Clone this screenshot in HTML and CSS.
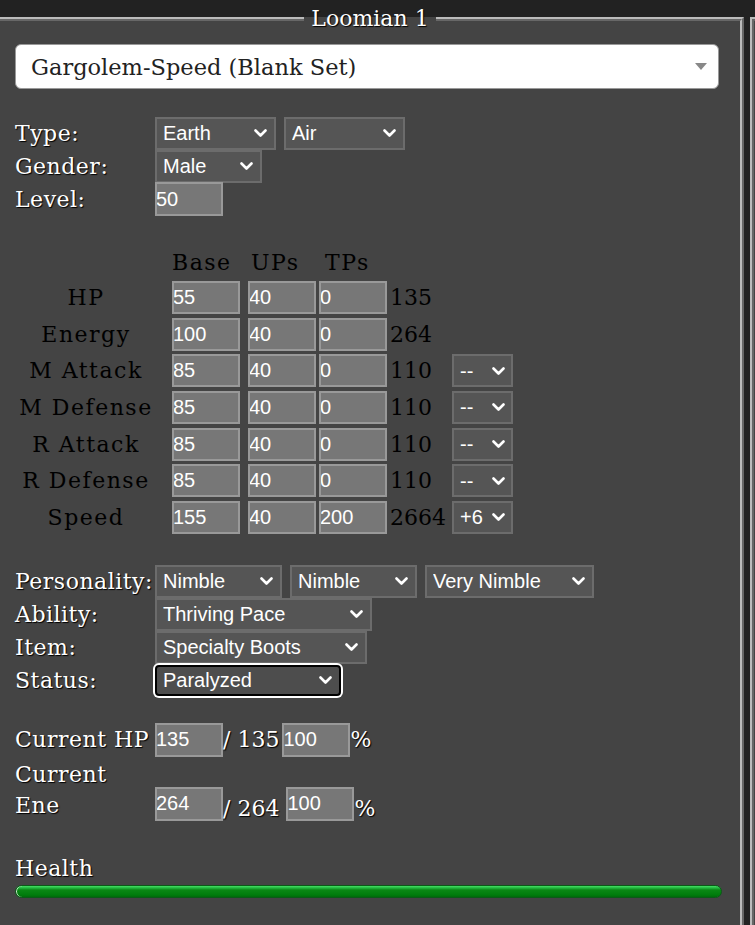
FILE: index.html
```html
<!DOCTYPE html>
<html>
<head>
    <title>Loomian Damage Calculator</title>
    <link rel="stylesheet" href="styles.css">
</head>
<body>
    <div class="panels">
        <fieldset class="poke">
            <legend>Loomian 1</legend>

            <div class="set-select">
                <span>Gargolem-Speed (Blank Set)</span>
                <span class="tri"></span>
            </div>

            <div class="info">
                <div class="row">
                    <span class="lbl">Type:</span>
                    <span class="sel w-type"><select><option>Earth</option></select><svg class="chev" viewBox="0 0 13 8"><path d="M1.5 1.5 6.5 6.5 11.5 1.5"/></svg></span>
                    <span class="sel w-type"><select><option>Air</option></select><svg class="chev" viewBox="0 0 13 8"><path d="M1.5 1.5 6.5 6.5 11.5 1.5"/></svg></span>
                </div>
                <div class="row">
                    <span class="lbl">Gender:</span>
                    <span class="sel w-gender"><select><option>Male</option></select><svg class="chev" viewBox="0 0 13 8"><path d="M1.5 1.5 6.5 6.5 11.5 1.5"/></svg></span>
                </div>
                <div class="row">
                    <span class="lbl">Level:</span>
                    <input type="text" class="val tall" value="50">
                </div>
            </div>

            <div class="stats">
                <div></div>
                <div class="hd">Base</div>
                <div class="hd hd-ups">UPs</div>
                <div class="hd hd-tps">TPs</div>
                <div></div>
                <div></div>

                <div class="name">HP</div>
                <div><input type="text" class="val" value="55"></div>
                <div><input type="text" class="val" value="40"></div>
                <div><input type="text" class="val" value="0"></div>
                <div class="total">135</div>
                <div></div>

                <div class="name">Energy</div>
                <div><input type="text" class="val" value="100"></div>
                <div><input type="text" class="val" value="40"></div>
                <div><input type="text" class="val" value="0"></div>
                <div class="total">264</div>
                <div></div>

                <div class="name">M Attack</div>
                <div><input type="text" class="val" value="85"></div>
                <div><input type="text" class="val" value="40"></div>
                <div><input type="text" class="val" value="0"></div>
                <div class="total">110</div>
                <div><span class="sel w-boost"><select><option>--</option></select><svg class="chev" viewBox="0 0 13 8"><path d="M1.5 1.5 6.5 6.5 11.5 1.5"/></svg></span></div>

                <div class="name">M Defense</div>
                <div><input type="text" class="val" value="85"></div>
                <div><input type="text" class="val" value="40"></div>
                <div><input type="text" class="val" value="0"></div>
                <div class="total">110</div>
                <div><span class="sel w-boost"><select><option>--</option></select><svg class="chev" viewBox="0 0 13 8"><path d="M1.5 1.5 6.5 6.5 11.5 1.5"/></svg></span></div>

                <div class="name">R Attack</div>
                <div><input type="text" class="val" value="85"></div>
                <div><input type="text" class="val" value="40"></div>
                <div><input type="text" class="val" value="0"></div>
                <div class="total">110</div>
                <div><span class="sel w-boost"><select><option>--</option></select><svg class="chev" viewBox="0 0 13 8"><path d="M1.5 1.5 6.5 6.5 11.5 1.5"/></svg></span></div>

                <div class="name">R Defense</div>
                <div><input type="text" class="val" value="85"></div>
                <div><input type="text" class="val" value="40"></div>
                <div><input type="text" class="val" value="0"></div>
                <div class="total">110</div>
                <div><span class="sel w-boost"><select><option>--</option></select><svg class="chev" viewBox="0 0 13 8"><path d="M1.5 1.5 6.5 6.5 11.5 1.5"/></svg></span></div>

                <div class="name">Speed</div>
                <div><input type="text" class="val" value="155"></div>
                <div><input type="text" class="val" value="40"></div>
                <div><input type="text" class="val" value="200"></div>
                <div class="total">2664</div>
                <div><span class="sel w-boost"><select><option>+6</option></select><svg class="chev" viewBox="0 0 13 8"><path d="M1.5 1.5 6.5 6.5 11.5 1.5"/></svg></span></div>
            </div>

            <div class="info misc">
                <div class="row">
                    <span class="lbl">Personality:</span>
                    <span class="sel w-pers"><select><option>Nimble</option></select><svg class="chev" viewBox="0 0 13 8"><path d="M1.5 1.5 6.5 6.5 11.5 1.5"/></svg></span>
                    <span class="sel w-pers"><select><option>Nimble</option></select><svg class="chev" viewBox="0 0 13 8"><path d="M1.5 1.5 6.5 6.5 11.5 1.5"/></svg></span>
                    <span class="sel w-pers3"><select><option>Very Nimble</option></select><svg class="chev" viewBox="0 0 13 8"><path d="M1.5 1.5 6.5 6.5 11.5 1.5"/></svg></span>
                </div>
                <div class="row">
                    <span class="lbl">Ability:</span>
                    <span class="sel w-ability"><select><option>Thriving Pace</option></select><svg class="chev" viewBox="0 0 13 8"><path d="M1.5 1.5 6.5 6.5 11.5 1.5"/></svg></span>
                </div>
                <div class="row">
                    <span class="lbl">Item:</span>
                    <span class="sel w-item"><select><option>Specialty Boots</option></select><svg class="chev" viewBox="0 0 13 8"><path d="M1.5 1.5 6.5 6.5 11.5 1.5"/></svg></span>
                </div>
                <div class="row">
                    <span class="lbl">Status:</span>
                    <span class="sel w-status focus"><select><option>Paralyzed</option></select><svg class="chev" viewBox="0 0 13 8"><path d="M1.5 1.5 6.5 6.5 11.5 1.5"/></svg></span>
                </div>
            </div>

            <div class="info cur">
                <div class="row hp-row">
                    <span class="lbl">Current HP</span>
                    <input type="text" class="val tall" value="135">
                    <span class="of">/ 135</span>
                    <input type="text" class="val tall" value="100">
                    <span class="pct">%</span>
                </div>
                <div class="row ene-row">
                    <span class="lbl">Current<br>Ene</span>
                    <input type="text" class="val tall" value="264">
                    <span class="of of-wide">/ 264</span>
                    <input type="text" class="val tall" value="100">
                    <span class="pct">%</span>
                </div>
            </div>

            <div class="health">
                <div class="health-lbl">Health</div>
                <div class="bar"></div>
            </div>
        </fieldset>

        <fieldset class="poke next"></fieldset>
    </div>
</body>
</html>
```

FILE: styles.css
```css
body {
    margin: 0;
    background-color: #222;
    overflow: hidden;
    font-family: "DejaVu Serif", serif;
    font-size: 22px;
    color: #fff;
}

.panels {
    display: flex;
    align-items: flex-start;
    gap: 6px;
    width: 1600px;
    margin-left: -4px;
    padding-top: 6px;
}

.poke {
    flex: none;
    box-sizing: border-box;
    width: 748px;
    min-height: 1000px;
    margin: 0;
    padding: 12px 15px 20px;
    border: 4px ridge #bbb;
    background-color: #444;
}

/* second panel has no visible legend, so drop it to the same border line */
.poke.next {
    margin-top: 11px;
}

legend {
    margin: 0 auto;
    padding: 0 7px;
    line-height: 26px;
    text-shadow: 1px 1px 1px #000;
}

/* set chooser */
.set-select {
    box-sizing: border-box;
    width: 704px;
    height: 45px;
    display: flex;
    align-items: center;
    justify-content: space-between;
    padding: 0 11px 0 15px;
    background-color: #fff;
    border: 1px solid #999;
    border-radius: 6px;
    color: #222;
    font-size: 22.5px;
}

.tri {
    width: 0;
    height: 0;
    border-left: 6px solid transparent;
    border-right: 6px solid transparent;
    border-top: 7px solid #888;
}

/* label rows */
.info {
    margin-top: 27.7px;
}

.row {
    display: flex;
    align-items: center;
    height: 33px;
}

.lbl {
    flex: none;
    width: 140px;
    line-height: 31px;
    letter-spacing: 0.5px;
    white-space: nowrap;
    text-shadow: 1px 1px 1px #000;
}

.sel {
    box-sizing: border-box;
    display: inline-flex;
    align-items: center;
    height: 33px;
    padding-right: 7px;
    background-color: #555;
    border: 2px solid #6c6c6c;
}

.sel + .sel {
    margin-left: 8px;
}

.sel select {
    flex: 1;
    min-width: 0;
    height: 100%;
    padding: 0 0 0 6px;
    appearance: none;
    -webkit-appearance: none;
    background: transparent;
    border: 0;
    outline: none;
    color: #fff;
    font: 20px "Liberation Sans", Arial, sans-serif;
}

.chev {
    flex: none;
    width: 13px;
    height: 8px;
}

.chev path {
    fill: none;
    stroke: #fff;
    stroke-width: 2.6;
    stroke-linecap: round;
    stroke-linejoin: round;
}

.sel.focus {
    height: 31px;
    border: 2px solid #000;
    border-radius: 4px;
    box-shadow: 0 0 0 2px #fff;
    background-color: #4d4d4d;
}

.w-type { width: 121px; }
.w-gender { width: 107px; }
.w-pers { width: 127px; }
.w-pers3 { width: 169px; }
.w-ability { width: 217px; }
.w-item { width: 212px; }
.w-status { width: 186px; }
.w-boost { width: 61px; padding-right: 6px; }

.val {
    box-sizing: border-box;
    width: 68px;
    height: 33px;
    padding: 0;
    text-indent: -1px;
    background-color: #777;
    border: 2px solid #999;
    outline: none;
    color: #fff;
    font: 20px "Liberation Sans", Arial, sans-serif;
}

.val.tall {
    height: 34px;
}

/* stats table */
.stats {
    display: grid;
    grid-template-columns: 157px 76px 71px 71px 62px 61px;
    grid-template-rows: 33px;
    grid-auto-rows: 36.67px;
    align-items: center;
    margin-top: 30.5px;
    color: #000;
}

.stats .name {
    padding-right: 15px;
    text-align: center;
    letter-spacing: 1.5px;
    line-height: 31px;
}

.hd {
    letter-spacing: 1.5px;
    line-height: 31px;
}

.hd-ups { padding-left: 3px; }
.hd-tps { padding-left: 6px; }

.total {
    line-height: 31px;
}

.misc {
    margin-top: 29.1px;
}

/* current hp / energy */
.cur {
    margin-top: 26px;
}

.hp-row {
    height: 34px;
}

.ene-row {
    height: auto;
    align-items: flex-end;
    margin-top: 2px;
}

.of {
    margin-right: 3px;
    text-shadow: 1px 1px 1px #000;
}

.of-wide {
    margin-right: 7px;
}

.pct {
    text-shadow: 1px 1px 1px #000;
}

/* health bar */
.health {
    margin-top: 34.4px;
}

.health-lbl {
    line-height: 28px;
    letter-spacing: 0.5px;
    text-shadow: 1px 1px 1px #000;
}

.bar {
    box-sizing: border-box;
    width: 707px;
    height: 13px;
    margin-top: 1.5px;
    border: 1px solid #0b5a18;
    border-radius: 7px;
    background: linear-gradient(#45e064, #22b53f 2px, #0a8814 4px, #007c0c 9px, #006a0a);
    box-shadow: inset 1px 0 0 #cfe9d3;
}
```
